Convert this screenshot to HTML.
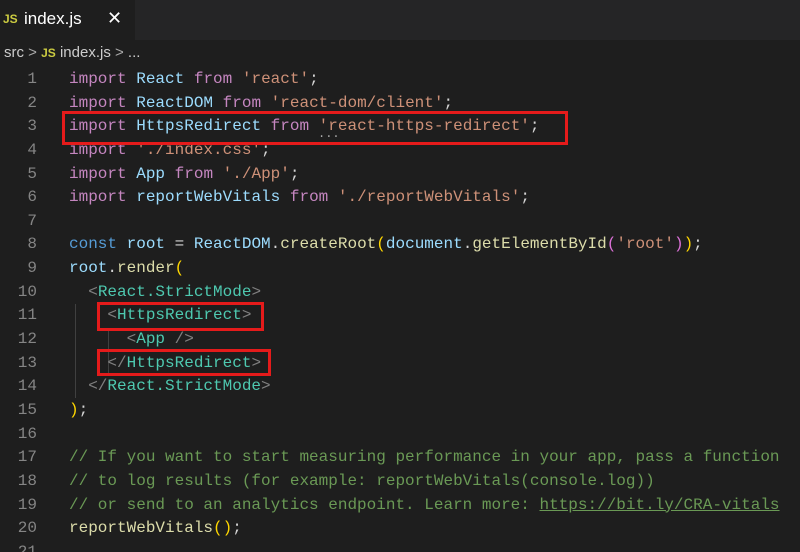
<!DOCTYPE html><html><head><style>
html,body{margin:0;width:800px;height:552px;overflow:hidden}
body{background:#1e1e1e;font-family:"Liberation Sans",sans-serif;position:relative}
.tabs{position:absolute;left:0;top:0;width:800px;height:40px;background:#252526}
.tab{position:absolute;left:0;top:0;width:135px;height:40px;background:#1e1e1e;color:#fff;font-size:17px}
.js{color:#cbcb41;font-weight:bold;font-size:12px}
.bc{position:absolute;left:4px;top:44px;color:#cccccc;font-size:15px}
.code{position:absolute;left:0;top:68px;font-family:"Liberation Mono",monospace;font-size:16px}
.l{height:23.65px;line-height:23.65px;white-space:pre;color:#d4d4d4;position:relative}
.n{display:inline-block;width:37px;text-align:right;color:#858585;margin-right:32px}
.k{color:#c586c0}.v{color:#9cdcfe}.s{color:#ce9178}.c{color:#569cd6}.f{color:#dcdcaa}.t{color:#4ec9b0}.g{color:#808080}.cm{color:#6a9955}.y{color:#ffd700}.p{color:#da70d6}.u{text-decoration:underline}
.box{position:absolute;border:3px solid #e51b1b;box-sizing:border-box}
.guide{position:absolute;width:1px;background:#404040}
</style></head><body>
<div class="tabs"><div class="tab"><span class="js" style="position:absolute;left:3px;top:12px">JS</span><span style="position:absolute;left:24px;top:9px">index.js</span><span style="position:absolute;left:107px;top:8px;font-size:18px">✕</span></div></div>
<div class="bc">src <span style="color:#aaa">&gt;</span> <span class="js">JS</span> index.js <span style="color:#aaa">&gt;</span> ...</div>
<div class="guide" style="left:75px;top:304px;height:94px"></div>
<div class="guide" style="left:108px;top:328px;height:47px"></div>
<div class="code">
<div class="l"><span class="n">1</span><span class="k">import</span> <span class="v">React</span> <span class="k">from</span> <span class="s">'react'</span>;</div>
<div class="l"><span class="n">2</span><span class="k">import</span> <span class="v">ReactDOM</span> <span class="k">from</span> <span class="s">'react-dom/client'</span>;</div>
<div class="l"><span class="n">3</span><span class="k">import</span> <span class="v">HttpsRedirect</span> <span class="k">from</span> <span class="s">'react-https-redirect'</span>;<span style="position:absolute;left:318px;top:8px;color:#aaa;font-size:12px">...</span></div>
<div class="l"><span class="n">4</span><span class="k">import</span> <span class="s">'./index.css'</span>;</div>
<div class="l"><span class="n">5</span><span class="k">import</span> <span class="v">App</span> <span class="k">from</span> <span class="s">'./App'</span>;</div>
<div class="l"><span class="n">6</span><span class="k">import</span> <span class="v">reportWebVitals</span> <span class="k">from</span> <span class="s">'./reportWebVitals'</span>;</div>
<div class="l"><span class="n">7</span></div>
<div class="l"><span class="n">8</span><span class="c">const</span> <span class="v">root</span> = <span class="v">ReactDOM</span>.<span class="f">createRoot</span><span class="y">(</span><span class="v">document</span>.<span class="f">getElementById</span><span class="p">(</span><span class="s">'root'</span><span class="p">)</span><span class="y">)</span>;</div>
<div class="l"><span class="n">9</span><span class="v">root</span>.<span class="f">render</span><span class="y">(</span></div>
<div class="l"><span class="n">10</span>  <span class="g">&lt;</span><span class="t">React.StrictMode</span><span class="g">&gt;</span></div>
<div class="l"><span class="n">11</span>    <span class="g">&lt;</span><span class="t">HttpsRedirect</span><span class="g">&gt;</span></div>
<div class="l"><span class="n">12</span>      <span class="g">&lt;</span><span class="t">App</span> <span class="g">/&gt;</span></div>
<div class="l"><span class="n">13</span>    <span class="g">&lt;/</span><span class="t">HttpsRedirect</span><span class="g">&gt;</span></div>
<div class="l"><span class="n">14</span>  <span class="g">&lt;/</span><span class="t">React.StrictMode</span><span class="g">&gt;</span></div>
<div class="l"><span class="n">15</span><span class="y">)</span>;</div>
<div class="l"><span class="n">16</span></div>
<div class="l"><span class="n">17</span><span class="cm">// If you want to start measuring performance in your app, pass a function</span></div>
<div class="l"><span class="n">18</span><span class="cm">// to log results (for example: reportWebVitals(console.log))</span></div>
<div class="l"><span class="n">19</span><span class="cm">// or send to an analytics endpoint. Learn more: <span class="u">https://bit.ly/CRA-vitals</span></span></div>
<div class="l"><span class="n">20</span><span class="f">reportWebVitals</span><span class="y">()</span>;</div>
<div class="l"><span class="n">21</span></div>
</div>
<div class="box" style="left:62px;top:111px;width:506px;height:34px"></div>
<div class="box" style="left:97px;top:302px;width:167px;height:29px"></div>
<div class="box" style="left:97px;top:349px;width:174px;height:27px"></div>
</body></html>
